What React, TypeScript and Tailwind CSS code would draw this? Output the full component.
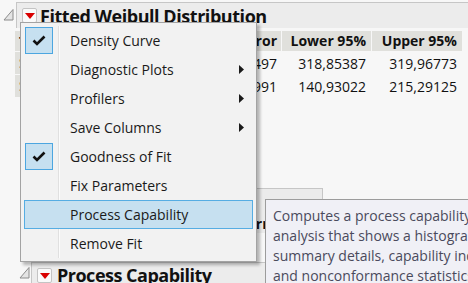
const menuItems = [
  { label: "Density Curve", checked: true },
  { label: "Diagnostic Plots", sub: true },
  { label: "Profilers", sub: true },
  { label: "Save Columns", sub: true },
  { label: "Goodness of Fit", checked: true },
  { label: "Fix Parameters" },
  { label: "Process Capability", active: true },
  { label: "Remove Fit" },
];

const rows = [
  { label: "Scale α", estimate: "319,4108", stdError: "0,2894497", lower: "318,85387", upper: "319,96773" },
  { label: "Shape β", estimate: "174,1923", stdError: "19,050991", lower: "140,93022", upper: "215,29125" },
];

function Disclosure() {
  return (
    <svg width="11" height="13" viewBox="0 0 11 13">
      <path d="M1 12 L10 1.5 L10 12 Z" fill="#e4e4e4" stroke="#8c8c8c" strokeWidth="1" />
    </svg>
  );
}

function RedButton() {
  return (
    <div className="flex h-[15px] w-[15px] items-start justify-center rounded-[2px] border border-[#c4c4c4] bg-[#fafafa] pt-[4px]">
      <svg width="10" height="6" viewBox="0 0 10 6">
        <path d="M0 0 L10 0 L5 6 Z" fill="#d90000" />
      </svg>
    </div>
  );
}

function Check() {
  return (
    <svg width="14" height="11" viewBox="0 0 14 11">
      <path d="M1.5 5.5 L5 9 L12.5 1.5" fill="none" stroke="#111" strokeWidth="2.6" />
    </svg>
  );
}

function SubArrow() {
  return (
    <svg width="5" height="9" viewBox="0 0 5 9">
      <path d="M0 0 L5 4.5 L0 9 Z" fill="#1a1a1a" />
    </svg>
  );
}

export default function App() {
  return (
    <div className="relative h-[283px] w-[468px] overflow-hidden bg-[#f7f7f7] pt-[2px] font-['Open_Sans',sans-serif] text-[#111]">
      {/* Fitted Weibull header */}
      <div className="flex h-[26px]">
        <div className="flex w-[16px] items-start pl-[3px] pt-[6px]">
          <Disclosure />
        </div>
        <div className="flex flex-1 items-center gap-[3px] border-l border-t border-[#c6c6c6] bg-[#ececec] pl-[5px]">
          <RedButton />
          <span className="text-[18px] font-bold leading-none tracking-[-0.45px]">Fitted Weibull Distribution</span>
        </div>
      </div>

      {/* Parameter estimates */}
      <div className="ml-[15px] mt-[3px] text-[14px]">
        <div className="flex h-[20px] gap-[1px] font-bold">
          <div className="w-[60px] bg-[#e0e0dc] pl-1">Type</div>
          <div className="w-[104px] bg-[#e0e0dc] pr-[4px] text-right">Estimate</div>
          <div className="w-[100px] bg-[#e0e0dc] pr-[4px] text-right leading-[20px]">Std Error</div>
          <div className="w-[89px] bg-[#e0e0dc] pr-[5px] text-right leading-[20px]">Lower 95%</div>
          <div className="w-[90px] bg-[#e0e0dc] pr-[5px] text-right leading-[20px]">Upper 95%</div>
        </div>
        {rows.map((r) => (
          <div key={r.label} className="mt-[1px] flex h-[22px] items-center gap-[1px]">
            <div className="h-full w-[60px] bg-[#e0e0dc] pl-1 leading-[22px]">{r.label}</div>
            <div className="w-[104px] pr-[4px] text-right">{r.estimate}</div>
            <div className="w-[100px] pr-[4px] text-right">{r.stdError}</div>
            <div className="w-[89px] pr-[5px] text-right">{r.lower}</div>
            <div className="w-[90px] pr-[5px] text-right">{r.upper}</div>
          </div>
        ))}
      </div>

      {/* goodness of fit box, mostly covered */}
      <div className="ml-[40px] mt-[91px] h-[45px] w-[283px] border-x border-t border-[#c6c6c6] bg-[#ebebeb] pt-[27px]">
        <div className="pl-[207px] text-[14px] font-bold leading-[16px]">Error</div>
      </div>

      {/* Process Capability header */}
      <div className="ml-[19px] mt-[29px] flex h-[30px]">
        <div className="flex w-[12px] items-start pt-[4px]">
          <Disclosure />
        </div>
        <div className="flex flex-1 items-start gap-[5px] border-l border-t border-[#c6c6c6] bg-[#ececec] pl-[5px] pt-[5px]">
          <RedButton />
          <span className="mt-[-2px] text-[18px] font-bold leading-none tracking-[-0.5px]">Process Capability</span>
        </div>
      </div>

      {/* Popup menu */}
      <div className="absolute left-[20px] top-[22px] h-[240px] w-[237px] border border-[#a3a3a3] bg-[#f2f2f2] pt-[3px] shadow-[3px_3px_3px_rgba(0,0,0,0.28)]">
        <div className="absolute bottom-[3px] left-[37px] top-[3px] w-[2px] border-l border-[#e0e0e0] bg-[#fbfbfb]" />
        {menuItems.map((item) => (
          <div
            key={item.label}
            className={
              item.active
                ? "relative mx-[3px] flex h-[29px] items-center border border-[#56ade3] bg-[#c6e0f0]"
                : "relative mx-[3px] flex h-[29px] items-center border border-transparent"
            }
          >
            <div className="flex w-[45px] shrink-0 items-center">
              {item.checked ? (
                <div className="flex h-[27px] w-[28px] items-center justify-center border border-[#4ca6e0] bg-[#c6e0f0]">
                  <Check />
                </div>
              ) : null}
            </div>
            <span className="text-[14px] leading-none text-[#1a1a1a]">{item.label}</span>
            {item.sub ? (
              <span className="ml-auto mr-[8px] flex items-center">
                <SubArrow />
              </span>
            ) : null}
          </div>
        ))}
      </div>

      {/* Tooltip */}
      <div className="absolute left-[265px] top-[199px] h-[100px] w-[230px] whitespace-nowrap border border-[#9c9c9c] bg-[#f0f0f6] pl-[7px] pt-[6px] text-[14px] leading-[20px] text-[#4a4a5c]">
        <div>Computes a process capability</div>
        <div>analysis that shows a histogram,</div>
        <div>summary details, capability indices,</div>
        <div>and nonconformance statistics.</div>
      </div>
    </div>
  );
}
